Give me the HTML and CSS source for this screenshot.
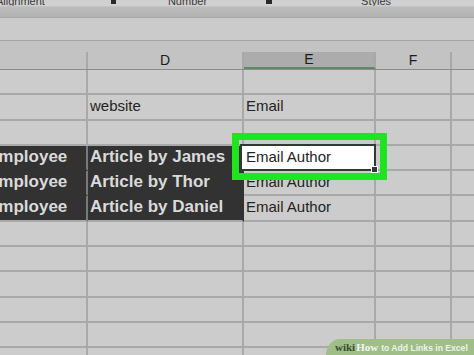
FILE: index.html
```html
<!DOCTYPE html>
<html lang="en">
<head>
<meta charset="utf-8">
<title>How to Add Links in Excel</title>
<link rel="stylesheet" href="styles.css">
</head>
<body>
<div class="page">
  <div class="ribbon">
    <span class="rlabel l1">Alignment</span>
    <span class="launch k1"></span>
    <span class="rlabel l2">Number</span>
    <span class="launch k2"></span>
    <span class="rlabel l3">Styles</span>
  </div>
  <div class="band"></div>
  <div class="fbar"></div>
  <div class="colhead">
    <div class="hc"></div>
    <div class="hc">D</div>
    <div class="hc hsel">E</div>
    <div class="hc">F</div>
    <div class="hc last"></div>
  </div>
  <div class="sheet">
    <div class="row"><div class="cell"></div><div class="cell"></div><div class="cell"></div><div class="cell"></div><div class="cell last"></div></div>
    <div class="row"><div class="cell"></div><div class="cell">website</div><div class="cell">Email</div><div class="cell"></div><div class="cell last"></div></div>
    <div class="row"><div class="cell"></div><div class="cell"></div><div class="cell"></div><div class="cell"></div><div class="cell last"></div></div>
    <div class="row"><div class="cell dark cut">Employee</div><div class="cell dark dd">Article by James</div><div class="cell active"><div class="selbox"></div><span class="seltext">Email Author</span><div class="hl"></div></div><div class="cell"></div><div class="cell last"></div></div>
    <div class="row"><div class="cell dark cut">Employee</div><div class="cell dark dd">Article by Thor</div><div class="cell">Email Author</div><div class="cell"></div><div class="cell last"></div></div>
    <div class="row"><div class="cell dark cut end">Employee</div><div class="cell dark dd end">Article by Daniel</div><div class="cell">Email Author</div><div class="cell"></div><div class="cell last"></div></div>
    <div class="row"><div class="cell"></div><div class="cell"></div><div class="cell"></div><div class="cell"></div><div class="cell last"></div></div>
    <div class="row"><div class="cell"></div><div class="cell"></div><div class="cell"></div><div class="cell"></div><div class="cell last"></div></div>
    <div class="row"><div class="cell"></div><div class="cell"></div><div class="cell"></div><div class="cell"></div><div class="cell last"></div></div>
    <div class="row"><div class="cell"></div><div class="cell"></div><div class="cell"></div><div class="cell"></div><div class="cell last"></div></div>
    <div class="row"><div class="cell"></div><div class="cell"></div><div class="cell"></div><div class="cell"></div><div class="cell last"></div></div>
    <div class="row"><div class="cell"></div><div class="cell"></div><div class="cell"></div><div class="cell"></div><div class="cell last"></div></div>
  </div>
  <div class="badge"><span class="wiki">wiki</span><span class="how">How</span><span class="title">to Add Links in Excel</span></div>
</div>
</body>
</html>
```

FILE: styles.css
```css
* { box-sizing: border-box; }
html, body {
  margin: 0;
  padding: 0;
  background: #cccccc;
}
body {
  width: 474px;
  height: 355px;
  overflow: hidden;
  font-family: "Liberation Sans", Arial, sans-serif;
}
.page {
  position: relative;
  width: 474px;
  height: 355px;
  overflow: hidden;
}
.ribbon {
  height: 6px;
  background: #d0d0d0;
  display: flex;
  align-items: flex-start;
  overflow: hidden;
}
.rlabel {
  font-size: 11px;
  line-height: 12px;
  margin-top: -5px;
  color: #3a3a3a;
  white-space: nowrap;
}
.l1 { margin-left: -4px; }
.launch {
  width: 5px;
  height: 4px;
  background: #2a2a2a;
  flex: none;
}
.k1 { margin-left: 66px; }
.l2 { margin-left: 52px; }
.k2 { margin-left: 59px; width: 6px; }
.l3 { margin-left: 89px; }
.band {
  height: 12px;
  background: linear-gradient(#bdbdbd, #b2b2b2);
  border-top: 1px solid #c2c2c2;
  border-bottom: 1px solid #a9a9a9;
}
.fbar {
  height: 23px;
  background: #cbcbcb;
  border-bottom: 1px solid #a3a3a3;
}
.colhead {
  height: 29px;
  padding-top: 11px;
  background: #c3c3c3;
  border-bottom: 1px solid #8c8c8c;
  display: grid;
  grid-template-columns: 88px 156px 132px 76px 1fr;
}
.hc {
  height: 17px;
  border-right: 2px solid #a9a9a9;
  font-size: 14px;
  line-height: 17px;
  text-align: center;
  color: #1c1c1c;
}
.hc.last { border-right: none; }
.hsel {
  background: #acacac;
  border-bottom: 2px solid #5d8a62;
  line-height: 15px;
}
.sheet {
  display: flex;
  flex-direction: column;
}
.row {
  height: 25.3px;
  display: grid;
  grid-template-columns: 88px 156px 132px 76px 1fr;
}
.cell {
  background: #cccccc;
  border-right: 2px solid #a9a9a9;
  border-bottom: 2px solid #a9a9a9;
  font-size: 15px;
  line-height: 21px;
  padding-left: 2px;
  color: #242424;
  white-space: nowrap;
  overflow: hidden;
}
.cell.last { border-right: none; }
.dark {
  background: #323232;
  color: #dadada;
  font-weight: bold;
  font-size: 17px;
  line-height: 22px;
  border-bottom-color: #323232;
}
.dark.end { border-bottom-color: #a9a9a9; }
.cut {
  text-indent: -15px;
  border-right-color: #7a7a7a;
}
.dd { border-right-color: #323232; }
.active {
  position: relative;
  overflow: visible;
}
.selbox {
  position: absolute;
  top: -2px;
  right: -2px;
  bottom: -2px;
  left: -4px;
  background: #ffffff;
  border: 2px solid #2f3a31;
  z-index: 1;
}
.selbox::after {
  content: "";
  position: absolute;
  right: -4px;
  bottom: -4px;
  width: 5px;
  height: 5px;
  background: #2f3a31;
  border: 1px solid #ffffff;
}
.seltext {
  position: relative;
  z-index: 2;
}
.hl {
  position: absolute;
  top: -13px;
  right: -13px;
  bottom: -11px;
  left: -12px;
  border: 7px solid #1fe41f;
  z-index: 3;
}
.badge {
  position: absolute;
  right: 0;
  bottom: 0;
  width: 148px;
  height: 16px;
  padding-left: 9px;
  background: #9fbe88;
  border-top-left-radius: 14px 16px;
  display: flex;
  align-items: baseline;
  line-height: 16px;
  white-space: nowrap;
}
.wiki {
  font-family: "Liberation Serif", "Times New Roman", serif;
  font-weight: bold;
  font-size: 11px;
  color: #3b4a30;
}
.how {
  font-family: "Liberation Serif", "Times New Roman", serif;
  font-weight: bold;
  font-size: 11px;
  color: #f2f6ee;
  margin-left: 1px;
}
.title {
  font-weight: bold;
  font-size: 8.6px;
  color: #eef3ea;
  margin-left: 3px;
}
```
